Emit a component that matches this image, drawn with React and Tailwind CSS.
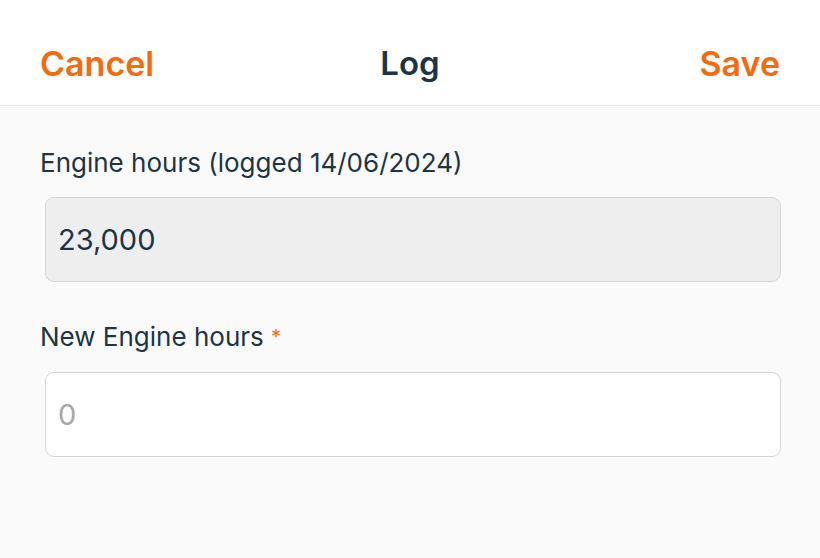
import { useState } from "react";

const font = { fontFamily: "Inter, 'Noto Sans', sans-serif" };

export default function App() {
  const [hours, setHours] = useState("");

  return (
    <div className="min-h-screen bg-[#fafafa] text-[#1f3442]" style={font}>
      {/* Nav bar */}
      <header className="h-[106px] bg-white border-b border-[#e6e6e6] grid grid-cols-3 items-center px-[40px] pt-[22px]">
        <button className="justify-self-start text-[34px] font-semibold text-[#f26b0f] leading-none">Cancel</button>
        <h1 className="justify-self-center text-[33px] font-semibold leading-none text-[#1f3442]">Log</h1>
        <button className="justify-self-end text-[34px] font-semibold text-[#f26b0f] leading-none">Save</button>
      </header>

      <main className="pl-[40px] pr-[39px] pt-[41px]">
        <label className="block text-[26px] leading-[32px]">Engine hours (logged 14/06/2024)</label>
        <div className="ml-[5px] mt-[18px] h-[85px] rounded-[9px] border border-[#d3d7da] bg-[#eeeeee] flex items-center px-[12px] text-[29px]">
          23,000
        </div>

        <label className="block mt-[39px] text-[26px] leading-[32px]">
          New Engine hours <span className="text-[#f26b0f] text-[20px] align-top">*</span>
        </label>
        <input
          value={hours}
          onChange={(e) => setHours(e.target.value)}
          placeholder="0"
          className="block ml-[5px] mt-[19px] h-[85px] w-[736px] rounded-[9px] border border-[#d3d7da] bg-white px-[12px] text-[29px] outline-none placeholder:text-[#a8a8a8]"
        />
      </main>
    </div>
  );
}
